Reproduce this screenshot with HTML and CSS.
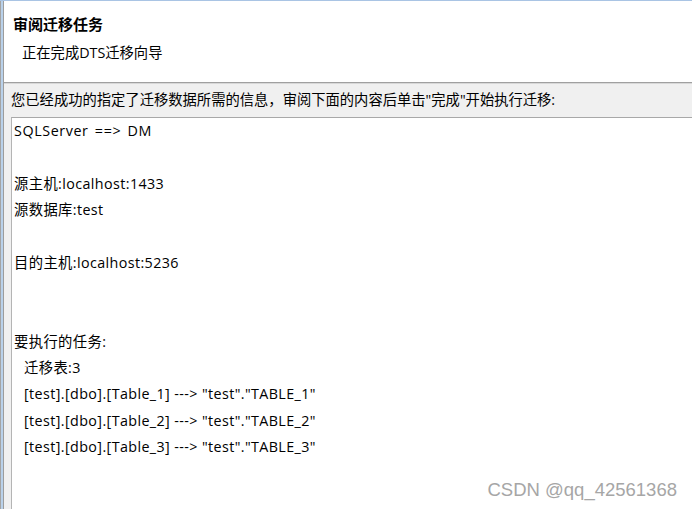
FILE: index.html
```html
<!DOCTYPE html>
<html lang="zh-CN">
<head>
<meta charset="utf-8">
<link rel="stylesheet" href="styles.css">
</head>
<body>
<div class="window">
  <div class="frame">
    <div class="content">
      <div class="header">
        <div class="title">审阅迁移任务</div>
        <div class="subtitle">正在完成DTS迁移向导</div>
      </div>
      <div class="panel">
        <div class="intro">您已经成功的指定了迁移数据所需的信息，审阅下面的内容后单击"完成"开始执行迁移:</div>
        <div class="box">
          <div class="line wide">SQLServer ==&gt; DM</div>
          <div class="line"></div>
          <div class="line">源主机:localhost:1433</div>
          <div class="line">源数据库:test</div>
          <div class="line"></div>
          <div class="line">目的主机:localhost:5236</div>
          <div class="line"></div>
          <div class="line"></div>
          <div class="line">要执行的任务:</div>
          <div class="line indent">迁移表:3</div>
          <div class="line indent">[test].[dbo].[Table_1] ---&gt; "test"."TABLE_1"</div>
          <div class="line indent">[test].[dbo].[Table_2] ---&gt; "test"."TABLE_2"</div>
          <div class="line indent">[test].[dbo].[Table_3] ---&gt; "test"."TABLE_3"</div>
          <div class="line"></div>
          <div class="line"></div>
        </div>
      </div>
    </div>
  </div>
  <div class="watermark">CSDN @qq_42561368</div>
</div>
</body>
</html>
```

FILE: styles.css
```css
html, body {
  margin: 0;
  padding: 0;
  background: #ffffff;
}
body {
  width: 692px;
  height: 509px;
  overflow: hidden;
  font-family: "Open Sans", "Noto Sans CJK SC", sans-serif;
  color: #1a1a1a;
}
.window {
  position: relative;
  width: 692px;
  height: 509px;
  border-top: 1px solid #a9c4e4;
  box-sizing: border-box;
  overflow: hidden;
}
.frame {
  height: 100%;
  border-left: 1px solid #a4a4a4;
  padding-left: 2px;
  background: #b9d1ea;
  box-sizing: border-box;
}
.content {
  height: 100%;
  border-left: 1px solid #9c9c9c;
  background: #f0f0f0;
  display: flex;
  flex-direction: column;
  box-sizing: border-box;
}
.header {
  background: #ffffff;
  height: 82px;
  border-bottom: 1px solid #a0a0a0;
  box-shadow: 0 1px 0 #d8d8d8;
  padding: 12px 0 0 9px;
  box-sizing: border-box;
  flex: none;
}
.title {
  font-size: 15px;
  font-weight: bold;
  line-height: 22px;
  color: #000;
}
.subtitle {
  font-size: 14.3px;
  line-height: 22px;
  margin-top: 7px;
  padding-left: 9px;
  color: #000;
}
.panel {
  flex: 1;
  padding: 4px 0 0 7px;
  display: flex;
  flex-direction: column;
  min-height: 0;
}
.intro {
  font-size: 14.3px;
  line-height: 26px;
  color: #000;
  white-space: nowrap;
}
.box {
  flex: 1;
  margin-top: 4px;
  margin-right: -20px;
  background: #ffffff;
  border-top: 1px solid #a8a8a8;
  border-left: 1px solid #b4b4b4;
  padding-left: 2px;
}
.line {
  font-size: 14.3px;
  line-height: 26.33px;
  height: 26.33px;
  color: #000;
  white-space: nowrap;
  letter-spacing: 0.4px;
}
.wide {
  letter-spacing: 0.6px;
  word-spacing: 2px;
}
.indent {
  padding-left: 10px;
}
.watermark {
  position: absolute;
  right: 15px;
  bottom: 8px;
  font-family: "Liberation Sans", Arial, sans-serif;
  font-size: 18.5px;
  color: #a6a6a6;
  text-shadow: 0 0 1px #fff;
}
```
